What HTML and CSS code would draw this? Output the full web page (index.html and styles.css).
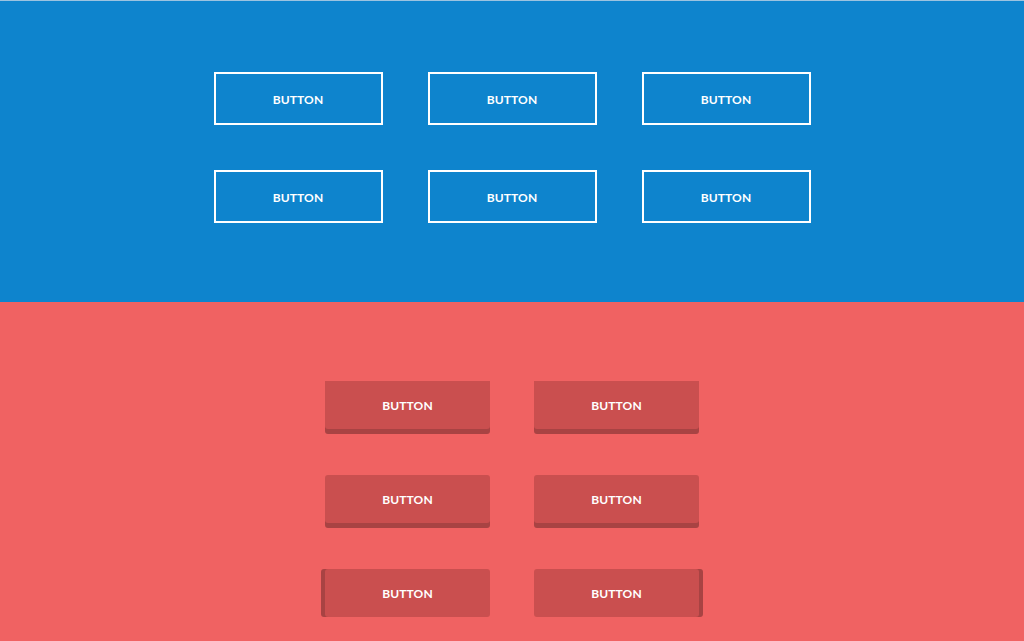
FILE: index.html
```html
<!DOCTYPE html>
<html>
  <head>
    <meta charset="utf-8" />
    <title>Buttons</title>
    <link rel="stylesheet" href="styles.css">
  </head>
  <body>
    <div class="band blue">
      <div class="grid ghost">
        <a href="#" class="btn-line">Button</a>
        <a href="#" class="btn-line">Button</a>
        <a href="#" class="btn-line">Button</a>
        <a href="#" class="btn-line">Button</a>
        <a href="#" class="btn-line">Button</a>
        <a href="#" class="btn-line">Button</a>
      </div>
    </div>
    <div class="band red">
      <div class="grid solid">
        <a href="#" class="btn-3d down flat">Button</a>
        <a href="#" class="btn-3d down flat">Button</a>
        <a href="#" class="btn-3d down">Button</a>
        <a href="#" class="btn-3d down">Button</a>
        <a href="#" class="btn-3d left">Button</a>
        <a href="#" class="btn-3d right">Button</a>
      </div>
    </div>
  </body>
</html>
```
FILE: styles.css
```css
html, body { margin: 0; padding: 0; }
body { font-family: Lato, "Open Sans", sans-serif; background-color: #f06262; overflow: hidden; }

.band { display: flex; justify-content: center; }
.blue { background-color: #0e84cd; border-top: 1px solid #9cc3e0; padding-top: 71px; box-sizing: border-box; height: 302px; }
.red { background-color: #f06262; padding-top: 79px; height: 339px; box-sizing: border-box; }

.grid { display: grid; }
.ghost { grid-template-columns: repeat(3, 169px); column-gap: 45px; row-gap: 45px; align-content: start; }
.solid { grid-template-columns: repeat(2, 165px); column-gap: 44px; row-gap: 46px; align-content: start; }

a { text-decoration: none; color: #fff; font-weight: 700; font-size: 12px; letter-spacing: 0.1px; text-transform: uppercase; display: flex; align-items: center; justify-content: center; padding-top: 1px; box-sizing: border-box; }

.btn-line { height: 53px; border: 2px solid #fff; }

.btn-3d { height: 48px; background-color: #ca4f4f; border-radius: 3px; }
.btn-3d.flat { border-radius: 0 0 3px 3px; }
.btn-3d.down { box-shadow: 0 5px 0 #a84343; }
.btn-3d.left { box-shadow: -4px 0 0 #a84343; }
.btn-3d.right { box-shadow: 4px 0 0 #a84343; }
```
